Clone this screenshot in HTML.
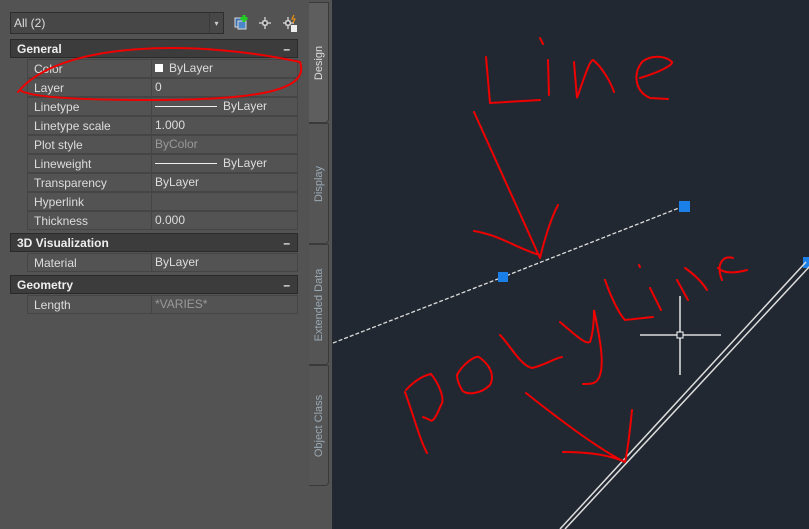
<!DOCTYPE html>
<html><head><style>
body{margin:0;width:809px;height:529px;overflow:hidden;background:#222831;font-family:"Liberation Sans",sans-serif;position:relative}
#panel{position:absolute;left:0;top:0;width:332px;height:529px;background:#535353}
.dd{position:absolute;left:10px;top:12px;width:214px;height:22px;background:#474747;border:1px solid #2e2e2e;box-sizing:border-box;color:#ddd;font-size:12px;line-height:20px;padding-left:3px}
.dd .ar{position:absolute;right:0;top:0;width:13px;height:20px;border-left:1px solid #3a3a3a;color:#ccc;font-size:8px;text-align:center;line-height:22px}
.hdr{position:absolute;left:10px;width:288px;height:19px;background:#3c3c3c;border:1px solid #2a2a2a;box-sizing:border-box;color:#eee;font-weight:bold;font-size:12px;line-height:18px;padding-left:6px}
.hdr b{position:absolute;right:7px;top:0}
.row{position:absolute;left:27px;width:271px;height:19px;border:1px solid #454545;box-sizing:border-box;color:#ddd;font-size:12px;line-height:19px}
.row .k{position:absolute;left:6px}
.row .v{position:absolute;left:123px;top:-1px;height:19px;border-left:1px solid #454545;padding-left:3px;width:140px}
.grey{color:#999}
.tab{position:absolute;left:309px;width:20px;background:#555;border:1px solid #3a3a3a;border-left:none;box-sizing:border-box;border-radius:0 0 4px 0}
.tab span{position:absolute;left:50%;top:50%;transform:translate(-50%,-50%) rotate(-90deg);white-space:nowrap;font-size:11px;color:#9aa9b4}
.ln{display:inline-block;width:62px;height:1px;background:#eee;vertical-align:middle;margin-right:6px}
</style></head><body>
<div id="panel">
<div class="dd">All (2)<div class="ar">▾</div></div>
<svg style="position:absolute;left:232px;top:13px" width="70" height="22">
<rect x="3" y="5" width="9" height="9" fill="#3b6fb0" stroke="#ddd" stroke-width="1"/><rect x="6" y="8" width="8" height="8" fill="#4a86c8" stroke="#ddd"/><path d="M12 2v7M8.5 5.5h7" stroke="#2c2" stroke-width="3"/>
<path d="M27 10h12M33 4v12" stroke="#fff"/><rect x="31" y="8" width="4" height="4" fill="#333" stroke="#fff"/>
<path d="M51 10h11M56 4v12" stroke="#fff"/><rect x="54" y="8" width="4" height="4" fill="#333" stroke="#fff"/><rect x="59" y="12" width="6" height="7" fill="#eee"/><path d="M62 2l-2 4h3l-2 4" stroke="#f90" fill="none"/>
</svg>
<div class="hdr" style="top:39px">General<b>–</b></div>
<div class="row" style="top:59px"><span class="k">Color</span><span class="v"><span style="display:inline-block;width:8px;height:8px;background:#fff;margin-right:6px"></span>ByLayer</span></div>
<div class="row" style="top:78px"><span class="k">Layer</span><span class="v">0</span></div>
<div class="row" style="top:97px"><span class="k">Linetype</span><span class="v"><span class="ln"></span>ByLayer</span></div>
<div class="row" style="top:116px"><span class="k">Linetype scale</span><span class="v">1.000</span></div>
<div class="row" style="top:135px"><span class="k">Plot style</span><span class="v grey">ByColor</span></div>
<div class="row" style="top:154px"><span class="k">Lineweight</span><span class="v"><span class="ln"></span>ByLayer</span></div>
<div class="row" style="top:173px"><span class="k">Transparency</span><span class="v">ByLayer</span></div>
<div class="row" style="top:192px"><span class="k">Hyperlink</span><span class="v"></span></div>
<div class="row" style="top:211px"><span class="k">Thickness</span><span class="v">0.000</span></div>
<div class="hdr" style="top:233px">3D Visualization<b>–</b></div>
<div class="row" style="top:253px"><span class="k">Material</span><span class="v">ByLayer</span></div>
<div class="hdr" style="top:275px">Geometry<b>–</b></div>
<div class="row" style="top:295px"><span class="k">Length</span><span class="v grey">*VARIES*</span></div>
<div class="tab" style="top:2px;height:121px;background:#5e5e5e"><span style="color:#ddd">Design</span></div>
<div class="tab" style="top:123px;height:121px"><span>Display</span></div>
<div class="tab" style="top:244px;height:121px"><span>Extended Data</span></div>
<div class="tab" style="top:365px;height:121px"><span>Object Class</span></div>
</div>
<svg style="position:absolute;left:0;top:0" width="809" height="529">
<path d="M333 343L503 277L684 206" stroke="#ddd" stroke-width="1.3" stroke-dasharray="4 2" fill="none"/>
<rect x="498" y="272" width="10" height="10" fill="#1a7fe6"/><rect x="679" y="201" width="11" height="11" fill="#1a7fe6"/><rect x="803" y="257" width="8" height="11" fill="#1a7fe6"/>
<path d="M806 262L560 529M810 266L565 529" stroke="#ddd" stroke-width="1.5" fill="none"/>
<path d="M640 335h81M680 296v79" stroke="#fff" stroke-width="1.3"/><rect x="677" y="332" width="6" height="6" fill="#222831" stroke="#fff"/>
<g stroke="#e00" stroke-width="2" fill="none" stroke-linecap="round">
<path d="M18 92C60 40 200 40 300 62C310 90 260 100 150 100C90 100 30 98 20 90"/>
<path d="M486 57L490 103L540 100M548 60L549 95M540 38L543 44M574 62L577 98C585 75 590 60 593 60C600 65 610 80 614 92M640 78C660 72 673 65 672 62C665 55 650 55 642 62C632 75 636 92 650 98L668 99"/>
<path d="M474 112L540 258M558 205C550 220 543 245 540 258M474 231C500 235 520 250 540 255"/>
<path d="M405 392C415 420 420 440 427 453M406 390C415 380 425 375 431 374C440 385 445 400 441 405C435 420 432 422 430 420L423 417"/>
<path d="M457 375C462 365 475 355 479 357C490 365 495 375 490 385C480 395 465 395 462 390C458 383 457 378 457 375"/>
<path d="M500 335C510 345 520 365 532 368C545 365 555 358 562 357"/>
<path d="M560 322C572 332 585 345 590 342C594 330 594 315 594 310C598 330 605 360 600 375C597 385 590 384 583 384"/>
<path d="M605 280C612 300 620 315 625 320L653 317M650 288L661 310M639 265L640 267M677 280L688 300M685 268C695 275 702 282 707 290M718 268C725 275 740 272 747 270M733 258C725 255 715 262 722 280"/>
<path d="M526 393C560 420 600 450 625 462M632 410C630 430 628 450 625 462M563 452C590 452 610 455 625 462"/>
</g>
</svg>
</body></html>
